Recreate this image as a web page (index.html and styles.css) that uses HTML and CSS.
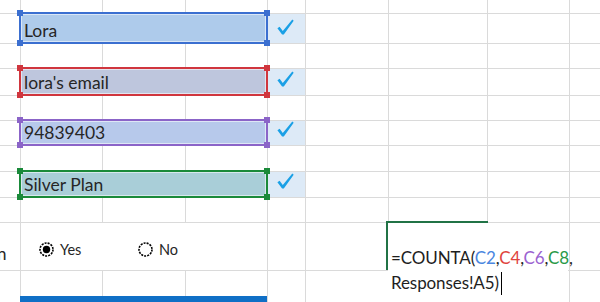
FILE: index.html
```html
<!DOCTYPE html>
<html>
<head>
<meta charset="utf-8">
<link rel="stylesheet" href="styles.css">
</head>
<body>
<div class="sheet">
  <!-- row 1 -->
  <div class="c"></div><div class="c"></div><div class="c"></div><div class="c"></div><div class="c"></div><div class="c"></div><div class="c"></div><div class="c"></div><div class="c"></div>
  <!-- row 2 -->
  <div class="c"></div>
  <div class="field f-blue"><span class="h tl"></span><span class="h tr"></span><span class="h bl"></span><span class="h br"></span><span class="val">Lora</span></div>
  <div class="chk"><svg class="tick" viewBox="0 0 17 16"><polygon points="0.4,9.3 2.6,7.8 5.8,11.9 15.3,0.5 16.7,1.7 6.8,15.6 5.1,15.6"/></svg></div>
  <div class="c"></div><div class="c"></div><div class="c"></div><div class="c"></div>
  <!-- row 3 -->
  <div class="c"></div><div class="c"></div><div class="c"></div><div class="c"></div><div class="c"></div><div class="c"></div><div class="c"></div><div class="c"></div><div class="c"></div>
  <!-- row 4 -->
  <div class="c"></div>
  <div class="field f-red"><span class="h tl"></span><span class="h tr"></span><span class="h bl"></span><span class="h br"></span><span class="val">lora's email</span></div>
  <div class="chk"><svg class="tick" viewBox="0 0 17 16"><polygon points="0.4,9.3 2.6,7.8 5.8,11.9 15.3,0.5 16.7,1.7 6.8,15.6 5.1,15.6"/></svg></div>
  <div class="c"></div><div class="c"></div><div class="c"></div><div class="c"></div>
  <!-- row 5 -->
  <div class="c"></div><div class="c"></div><div class="c"></div><div class="c"></div><div class="c"></div><div class="c"></div><div class="c"></div><div class="c"></div><div class="c"></div>
  <!-- row 6 -->
  <div class="c"></div>
  <div class="field f-purple"><span class="h tl"></span><span class="h tr"></span><span class="h bl"></span><span class="h br"></span><span class="val">94839403</span></div>
  <div class="chk"><svg class="tick" viewBox="0 0 17 16"><polygon points="0.4,9.3 2.6,7.8 5.8,11.9 15.3,0.5 16.7,1.7 6.8,15.6 5.1,15.6"/></svg></div>
  <div class="c"></div><div class="c"></div><div class="c"></div><div class="c"></div>
  <!-- row 7 -->
  <div class="c"></div><div class="c"></div><div class="c"></div><div class="c"></div><div class="c"></div><div class="c"></div><div class="c"></div><div class="c"></div><div class="c"></div>
  <!-- row 8 -->
  <div class="c"></div>
  <div class="field f-green"><span class="h tl"></span><span class="h tr"></span><span class="h bl"></span><span class="h br"></span><span class="val">Silver Plan</span></div>
  <div class="chk"><svg class="tick" viewBox="0 0 17 16"><polygon points="0.4,9.3 2.6,7.8 5.8,11.9 15.3,0.5 16.7,1.7 6.8,15.6 5.1,15.6"/></svg></div>
  <div class="c"></div><div class="c"></div><div class="c"></div><div class="c"></div>
  <!-- row 9 -->
  <div class="c"></div><div class="c"></div><div class="c"></div><div class="c"></div><div class="c"></div><div class="c"></div><div class="c"></div><div class="c"></div><div class="c"></div>
  <!-- row 10 -->
  <div class="c lbl"><span>n</span></div>
  <div class="radios">
    <label class="opt"><svg class="radio" viewBox="0 0 15 15"><circle class="ring" cx="7.5" cy="7.5" r="6.5"/><circle class="dot" cx="7.5" cy="7.5" r="3.7"/></svg><span>Yes</span></label>
    <label class="opt"><svg class="radio" viewBox="0 0 15 15"><circle class="ring" cx="7.5" cy="7.5" r="6.5"/></svg><span>No</span></label>
  </div>
  <div class="c"></div><div class="c"></div>
  <div class="active">
    <div class="editor"><span class="k">=COUNTA(</span><span class="r1">C2</span>,<span class="r2">C4</span>,<span class="r3">C6</span>,<span class="r4">C8</span>,<br>Responses!A5)<span class="caret"></span></div>
  </div>
  <div class="c"></div><div class="c"></div>
  <!-- row 11 -->
  <div class="c"></div>
  <div class="merge">
    <div class="c"></div><div class="c"></div><div class="c"></div>
    <div class="bar"></div>
  </div>
  <div class="c"></div><div class="c"></div><div class="c"></div><div class="c"></div><div class="c"></div>
</div>
</body>
</html>
```
FILE: styles.css
```css
html, body {
  margin: 0;
  padding: 0;
  background: #fff;
}

.sheet {
  position: relative;
  width: 600px;
  height: 302px;
  overflow: hidden;
  display: grid;
  grid-template-columns: 20px 81px 82px 81px 37px 82px 98px 81px 30px;
  grid-template-rows: 13px 29px 24px 26px 24px 24px 25px 25px 24px 47px 31px;
  gap: 1px;
  background: #dadada;
  font-family: Lato, "Open Sans", sans-serif;
  color: #262626;
}

.c {
  background: #fff;
}

.field {
  grid-column: span 3;
  margin: -2px -1px -1px -2px;
  position: relative;
  z-index: 1;
  box-sizing: border-box;
  border: 2px solid var(--b);
  background: var(--f);
  box-shadow: inset 0 0 0 1px rgba(255, 255, 255, 0.55);
  display: flex;
  align-items: flex-end;
  padding: 0 0 1px 3px;
  font-size: 17.5px;
  line-height: 20px;
  white-space: nowrap;
}

.f-blue { --b: #3b6fd0; --f: #aecbeb; }
.f-red { --b: #d0363e; --f: #bec6dd; }
.f-purple { --b: #8b64c8; --f: #b7c9eb; }
.f-green { --b: #1a8a3a; --f: #a9ced8; }

.h {
  position: absolute;
  width: 6px;
  height: 6px;
  background: var(--b);
}
.h.tl { left: -4px; top: -4px; }
.h.tr { right: -4px; top: -4px; }
.h.bl { left: -4px; bottom: -4px; }
.h.br { right: -4px; bottom: -4px; }

.chk {
  background: #ddeaf7;
  display: flex;
  align-items: flex-end;
  padding: 0 0 8px 9px;
}

.tick {
  width: 17px;
  height: 16px;
  display: block;
  fill: #1aa0e6;
}

.lbl {
  overflow: hidden;
  font-size: 17px;
  line-height: 20px;
  padding-top: 21px;
  box-sizing: border-box;
  white-space: nowrap;
}
.lbl span {
  display: inline-block;
  margin-left: -3px;
}

.radios {
  grid-column: span 3;
  background: #fff;
  display: flex;
  align-items: center;
  padding: 6px 0 0 18px;
  font-size: 14.5px;
}

.opt {
  display: flex;
  align-items: center;
  gap: 6px;
  width: 99px;
}

.radio {
  width: 15px;
  height: 15px;
  display: block;
}
.radio .ring {
  fill: #fff;
  stroke: #000;
  stroke-width: 1.6;
  stroke-dasharray: 2 1.1;
}
.radio .dot {
  fill: #000;
}

.active {
  margin: -2px -1px 0 -3px;
  border-top: 2px solid #217346;
  border-left: 2px solid #217346;
  background: #fff;
  position: relative;
  z-index: 2;
}

.editor {
  position: absolute;
  left: 0;
  top: 0;
  width: 180px;
  height: 79px;
  box-sizing: border-box;
  background: #fff;
  padding: 22px 0 0 3px;
  font-size: 17px;
  line-height: 25px;
  letter-spacing: -0.1px;
  white-space: nowrap;
  color: #1e1e1e;
}
.r1 { color: #4a86e0; }
.r2 { color: #e04440; }
.r3 { color: #9a62d0; }
.r4 { color: #2a9a48; }

.caret {
  display: inline-block;
  width: 1px;
  height: 23px;
  background: #000;
  vertical-align: -6px;
  margin-left: 2px;
}

.merge {
  grid-column: span 3;
  display: grid;
  grid-template-columns: 81px 82px 81px;
  grid-template-rows: 1fr 6px;
  column-gap: 1px;
}

.bar {
  grid-column: 1 / -1;
  margin-left: -1px;
  background: #0f6fc6;
}
```
